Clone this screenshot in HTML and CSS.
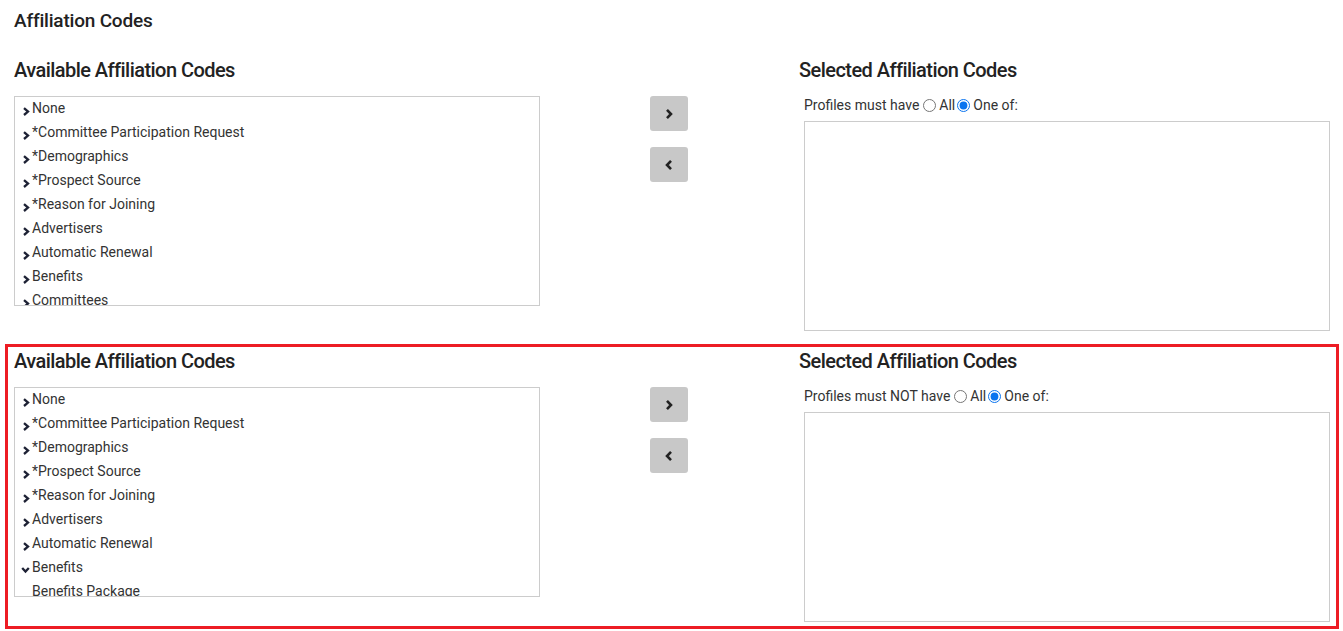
FILE: index.html
```html
<!DOCTYPE html>
<html lang="en">
<head>
<meta charset="utf-8">
<title>Affiliation Codes</title>
<link rel="stylesheet" href="styles.css">
</head>
<body>
<div class="page">
  <h1 class="page-title">Affiliation Codes</h1>

  <section class="picker">
    <div class="col-available">
      <h2 class="col-title">Available Affiliation Codes</h2>
      <div class="listbox">
        <ul class="tree">
          <li><svg class="chev" viewBox="0 0 8 9" width="8" height="9"><path d="M2 1.2 L6 4.6 L2 8"/></svg>None</li>
          <li><svg class="chev" viewBox="0 0 8 9" width="8" height="9"><path d="M2 1.2 L6 4.6 L2 8"/></svg>*Committee Participation Request</li>
          <li><svg class="chev" viewBox="0 0 8 9" width="8" height="9"><path d="M2 1.2 L6 4.6 L2 8"/></svg>*Demographics</li>
          <li><svg class="chev" viewBox="0 0 8 9" width="8" height="9"><path d="M2 1.2 L6 4.6 L2 8"/></svg>*Prospect Source</li>
          <li><svg class="chev" viewBox="0 0 8 9" width="8" height="9"><path d="M2 1.2 L6 4.6 L2 8"/></svg>*Reason for Joining</li>
          <li><svg class="chev" viewBox="0 0 8 9" width="8" height="9"><path d="M2 1.2 L6 4.6 L2 8"/></svg>Advertisers</li>
          <li><svg class="chev" viewBox="0 0 8 9" width="8" height="9"><path d="M2 1.2 L6 4.6 L2 8"/></svg>Automatic Renewal</li>
          <li><svg class="chev" viewBox="0 0 8 9" width="8" height="9"><path d="M2 1.2 L6 4.6 L2 8"/></svg>Benefits</li>
          <li><svg class="chev" viewBox="0 0 8 9" width="8" height="9"><path d="M2 1.2 L6 4.6 L2 8"/></svg>Committees</li>
        </ul>
      </div>
    </div>
    <div class="col-actions">
      <button class="move-btn" type="button" aria-label="Add"><svg viewBox="0 0 8 12" width="8" height="12"><path d="M2 1.8 L6 6 L2 10.2"/></svg></button>
      <button class="move-btn" type="button" aria-label="Remove"><svg viewBox="0 0 8 12" width="8" height="12"><path d="M6 1.8 L2 6 L6 10.2"/></svg></button>
    </div>
    <div class="col-selected">
      <h2 class="col-title">Selected Affiliation Codes</h2>
      <div class="mode">Profiles must have<input type="radio" name="m1" class="radio radio-all"><span>All</span><input type="radio" name="m1" class="radio radio-one" checked><span>One of:</span></div>
      <div class="selbox"></div>
    </div>
  </section>

  <section class="picker highlighted">
    <div class="col-available">
      <h2 class="col-title">Available Affiliation Codes</h2>
      <div class="listbox">
        <ul class="tree">
          <li><svg class="chev" viewBox="0 0 8 9" width="8" height="9"><path d="M2 1.2 L6 4.6 L2 8"/></svg>None</li>
          <li><svg class="chev" viewBox="0 0 8 9" width="8" height="9"><path d="M2 1.2 L6 4.6 L2 8"/></svg>*Committee Participation Request</li>
          <li><svg class="chev" viewBox="0 0 8 9" width="8" height="9"><path d="M2 1.2 L6 4.6 L2 8"/></svg>*Demographics</li>
          <li><svg class="chev" viewBox="0 0 8 9" width="8" height="9"><path d="M2 1.2 L6 4.6 L2 8"/></svg>*Prospect Source</li>
          <li><svg class="chev" viewBox="0 0 8 9" width="8" height="9"><path d="M2 1.2 L6 4.6 L2 8"/></svg>*Reason for Joining</li>
          <li><svg class="chev" viewBox="0 0 8 9" width="8" height="9"><path d="M2 1.2 L6 4.6 L2 8"/></svg>Advertisers</li>
          <li><svg class="chev" viewBox="0 0 8 9" width="8" height="9"><path d="M2 1.2 L6 4.6 L2 8"/></svg>Automatic Renewal</li>
          <li><svg class="chev down" viewBox="0 0 9 9" width="9" height="9"><path d="M1.2 3 L4.5 6.6 L7.8 3"/></svg>Benefits</li>
          <li class="child">Benefits Package</li>
        </ul>
      </div>
    </div>
    <div class="col-actions">
      <button class="move-btn" type="button" aria-label="Add"><svg viewBox="0 0 8 12" width="8" height="12"><path d="M2 1.8 L6 6 L2 10.2"/></svg></button>
      <button class="move-btn" type="button" aria-label="Remove"><svg viewBox="0 0 8 12" width="8" height="12"><path d="M6 1.8 L2 6 L6 10.2"/></svg></button>
    </div>
    <div class="col-selected">
      <h2 class="col-title">Selected Affiliation Codes</h2>
      <div class="mode">Profiles must NOT have<input type="radio" name="m2" class="radio radio-all"><span>All</span><input type="radio" name="m2" class="radio radio-one" checked><span>One of:</span></div>
      <div class="selbox"></div>
    </div>
  </section>
</div>
</body>
</html>
```

FILE: styles.css
```css
* { box-sizing: border-box; }

html, body {
  margin: 0;
  padding: 0;
  background: #fff;
}

body {
  font-family: Roboto, "Liberation Sans", Arial, sans-serif;
  color: #333;
  font-size: 14px;
}

.page {
  padding: 10px 4px 0 5px;
}

.page-title {
  margin: 0 0 21px 9px;
  font-size: 19px;
  line-height: 22px;
  font-weight: 500;
  letter-spacing: -0.2px;
  color: #222;
}

.picker {
  display: grid;
  grid-template-columns: 526px 1fr 531px;
  border: 3px solid transparent;
  padding: 2px 6px 4px 6px;
}

.picker + .picker {
  margin-top: 6px;
}

.picker.highlighted {
  border-color: #ed1c24;
}

.col-title {
  margin: 0;
  font-size: 20px;
  line-height: 24px;
  font-weight: 500;
  letter-spacing: -0.55px;
  color: #222;
}

.col-available .col-title {
  margin-bottom: 14px;
}

.listbox {
  height: 210px;
  border: 1px solid #ccc;
  overflow: hidden;
  padding: 0 0 0 7px;
}

.tree {
  list-style: none;
  margin: -1px 0 0 0;
  padding: 0;
}

.tree li {
  line-height: 24px;
  height: 24px;
  white-space: nowrap;
  color: #333;
}

.tree li.child {
  padding-left: 10px;
}

.chev {
  display: inline-block;
  width: 8px;
  height: 9px;
  margin-right: 2px;
  vertical-align: -3px;
}

.chev path {
  fill: none;
  stroke: #1e2235;
  stroke-width: 2.3;
  stroke-linecap: butt;
  stroke-linejoin: miter;
}

.chev.down {
  width: 9px;
  margin-left: -1px;
  margin-right: 2px;
  vertical-align: -2px;
}

.col-actions {
  padding: 38px 0 0 110px;
  display: flex;
  flex-direction: column;
  align-items: flex-start;
  gap: 16px;
}

.move-btn {
  width: 38px;
  height: 35px;
  border: none;
  border-radius: 3px;
  background: #c8c8c8;
  padding: 0;
  display: flex;
  align-items: center;
  justify-content: center;
  cursor: pointer;
}

.move-btn svg path {
  fill: none;
  stroke: #222;
  stroke-width: 2.6;
  stroke-linejoin: miter;
}

.mode {
  margin: 13px 0 6px 5px;
  height: 20px;
  display: flex;
  align-items: center;
  white-space: nowrap;
  font-size: 14px;
  color: #333;
}

.radio {
  width: 13px;
  height: 13px;
  margin: 0 3px 0 2px;
  accent-color: #0a74ef;
}

.radio-all {
  margin-left: 4px;
}

.radio-one {
  margin-left: 2px;
}

.selbox {
  margin-left: 5px;
  height: 210px;
  border: 1px solid #ccc;
}
```
